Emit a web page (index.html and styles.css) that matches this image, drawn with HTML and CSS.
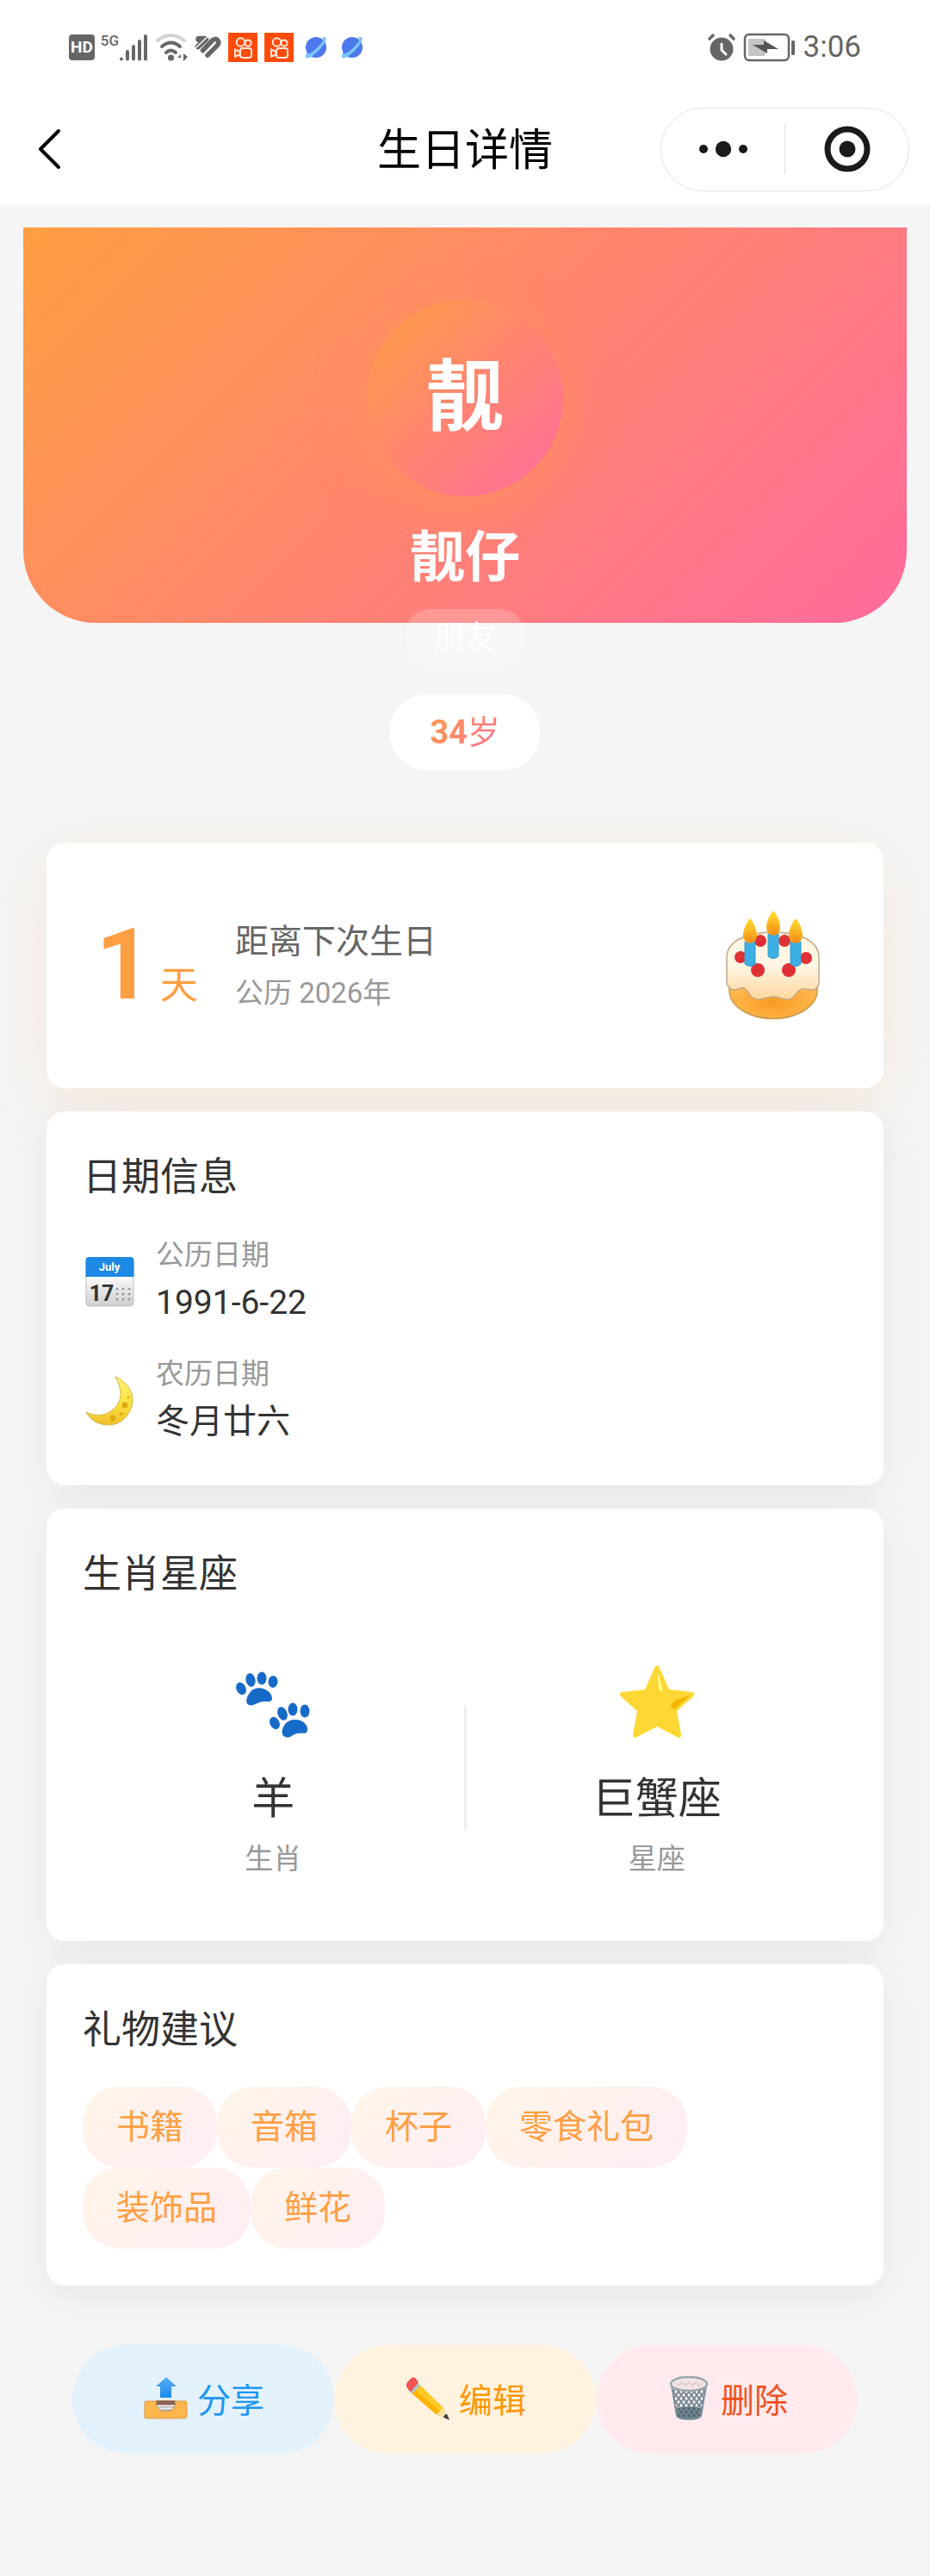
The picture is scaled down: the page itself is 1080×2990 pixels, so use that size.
FILE: index.html
```
<!DOCTYPE html>
<html lang="zh-CN">
<head>
    <meta charset="UTF-8">
    <meta name="viewport" content="width=device-width, initial-scale=1.0">
    <title>生日详情</title>
    <link rel="stylesheet" href="styles.css">
</head>
<body>
    <!-- Status bar -->
    <div class="status-bar">
        <div class="status-left">
            <span class="hd">HD</span>
            <span class="signal">
                <span class="network">5G</span>
                <svg width="34" height="32" viewBox="0 0 34 32" fill="none" stroke="#666" stroke-width="4" stroke-linecap="round">
                    <path d="M3 29.500v0M10 21v8.500M17 15v14.500M24 9v20.500M31 3v26.500"/>
                </svg>
            </span>
            <svg width="38" height="34" viewBox="0 0 38 34" fill="none" stroke-linecap="round" stroke-width="4">
                <path d="M3 9Q18 -3 34 9" stroke="#d2d2d2"/>
                <path d="M8 16Q18.500 7 29 16M13 23Q18.500 18 24 23" stroke="#666"/>
                <circle cx="18.500" cy="29" r="3.600" fill="#666"/>
                <path d="M30 25l-4 4h4v4zM33 24v9l5-5z" fill="#666"/>
            </svg>
            <svg width="31" height="30" viewBox="0 0 31 30" fill="none" stroke="#666" stroke-width="6.500" stroke-linecap="round">
                <path d="M4 14L13 5.500"/>
                <path d="M5 5.500h6" stroke-width="7.500"/>
                <path d="M9.500 18.500L21 6.500Q25 4 27 7Q29 10 26 13L15 24" stroke-width="5.500"/>
                <path d="M2 15L15 2.500M12.500 21.500L23 11" stroke="#fff" stroke-width="1.500"/>
            </svg>
            <svg width="34" height="34" viewBox="0 0 34 34" fill="none" stroke="#ffe9dc" stroke-width="2">
                <path d="M0 0h34v34H0z" fill="#ff4b0a" stroke="none"/>
                <circle cx="14.500" cy="11" r="4.800"/><circle cx="23" cy="12" r="3.600"/>
                <rect x="14" y="18" width="13" height="11" rx="3"/><path d="M13.500 22L8 19.500v8l5.500-2z"/>
            </svg>
            <svg width="34" height="34" viewBox="0 0 34 34" fill="none" stroke="#ffe9dc" stroke-width="2">
                <path d="M0 0h34v34H0z" fill="#ff4b0a" stroke="none"/>
                <circle cx="14.500" cy="11" r="4.800"/><circle cx="23" cy="12" r="3.600"/>
                <rect x="14" y="18" width="13" height="11" rx="3"/><path d="M13.500 22L8 19.500v8l5.500-2z"/>
            </svg>
            <svg width="34" height="34" viewBox="0 0 34 34">
                <circle cx="18" cy="17" r="12" fill="#4d79ec"/>
                <path d="M24 6Q32 3 29 10Q25 18 16 25Q9 31 6 29Q5 26 8 22Q7 27 14 22Q23 15 26 9Q27 6 24 6Z" fill="#7cc6fb"/>
            </svg>
            <svg width="34" height="34" viewBox="0 0 34 34">
                <circle cx="18" cy="17" r="12" fill="#4d79ec"/>
                <path d="M24 6Q32 3 29 10Q25 18 16 25Q9 31 6 29Q5 26 8 22Q7 27 14 22Q23 15 26 9Q27 6 24 6Z" fill="#7cc6fb"/>
            </svg>
        </div>
        <div class="status-right">
            <svg width="34" height="34" viewBox="0 0 34 34" fill="none" stroke-linecap="round" stroke-width="3.500">
                <circle cx="17" cy="19" r="13.500" fill="#666"/>
                <path d="M3 7l4-4M31 7l-4-4" stroke="#666"/>
                <path d="M17 13v7l5 5" stroke="#fff" stroke-width="3"/>
            </svg>
            <svg width="62" height="34" viewBox="0 0 62 34">
                <rect x="2" y="2" width="51" height="30" rx="5" fill="none" stroke="#666" stroke-width="2.500"/>
                <rect x="6" y="7" width="20" height="20" rx="2" fill="#c4c4c4"/>
                <path d="M11 14h13v-5l17 10H28v5z" fill="#555"/>
                <rect x="56" y="9" width="4" height="17" rx="1.500" fill="#666"/>
            </svg>
            <span class="time">3:06</span>
        </div>
    </div>

    <!-- Navigation bar -->
    <header class="nav-bar">
        <button type="button" class="back-btn" aria-label="返回">
            <svg width="30" height="50" viewBox="0 0 30 50" fill="none" stroke="#000" stroke-width="4" stroke-linecap="round" stroke-linejoin="round">
                <path d="M26 4L5 25L26 46"/>
            </svg>
        </button>
        <h1 class="nav-title">生日详情</h1>
        <div class="capsule">
            <button type="button" class="capsule-btn" aria-label="更多">
                <svg width="58" height="20" viewBox="0 0 58 20" fill="#1a1a1a">
                    <circle cx="6" cy="10" r="5"/><circle cx="29" cy="10" r="9.200"/><circle cx="52" cy="10" r="5"/>
                </svg>
            </button>
            <button type="button" class="capsule-btn" aria-label="关闭">
                <svg width="54" height="54" viewBox="0 0 54 54">
                    <circle cx="27" cy="27" r="23" fill="none" stroke="#1a1a1a" stroke-width="7"/>
                    <circle cx="27" cy="27" r="9.500" fill="#1a1a1a"/>
                </svg>
            </button>
        </div>
    </header>

    <main class="page">
        <!-- Profile -->
        <section class="hero">
            <div class="avatar">靓</div>
            <div class="name">靓仔</div>
            <div class="relation">朋友</div>
            <div class="age"><span class="age-text"><b>34</b>岁</span></div>
        </section>

        <div class="cards">
            <!-- Countdown -->
            <section class="card countdown">
                <div class="days"><span class="days-number">1</span><span class="days-unit">天</span></div>
                <div class="countdown-info">
                    <div class="countdown-label">距离下次生日</div>
                    <div class="countdown-date">公历 2026年</div>
                </div>
                <svg width="112" height="128" viewBox="0 0 112 128">
                    <defs>
                        <linearGradient id="icing" x1="0" y1="0" x2="0" y2="1">
                            <stop offset="0.500" stop-color="#fff6e4"/><stop offset="1" stop-color="#ffd69b"/>
                        </linearGradient>
                        <radialGradient id="base" cx="0.500" cy="0.600" r="0.500">
                            <stop offset="0" stop-color="#fa9a24"/><stop offset="1" stop-color="#ffb74d"/>
                        </radialGradient>
                        <radialGradient id="flame" gradientUnits="userSpaceOnUse" cx="0" cy="26" r="20">
                            <stop offset="0" stop-color="#f58d16"/><stop offset="1" stop-color="#fdd02d"/>
                        </radialGradient>
                    </defs>
                    <path d="M5 78V95C6 113 30 126.500 56 126.500S106 113 107 95V78Z" fill="url(#base)" stroke="#c99648" stroke-width="1.500"/>
                    <path d="M2 55C2 37 24 26 56 26S109 37 109 55V86C107 95 98 93 93 92C84 90 82 103 74 104C66 104 63 101 56 101C47 101 46 104 38 104C26 103 28 89 18 91C10 95 4 92 2 85Z" fill="url(#icing)" stroke="#c3a989" stroke-width="1.500"/>
                    <g fill="#df3034">
                        <circle cx="41" cy="36" r="7"/><circle cx="69" cy="36" r="7"/>
                        <circle cx="18" cy="55" r="7"/><circle cx="94" cy="56" r="7"/>
                        <circle cx="38" cy="70" r="8"/><circle cx="74" cy="70" r="8"/>
                    </g>
                    <g fill="#3eafe4" stroke="#319ccd">
                        <path d="M50 28h12v26q-6 5-12 0zM23 37h12v26q-6 5-12 0zM76 37h12v26q-6 5-12 0z"/>
                    </g>
                    <g fill="url(#flame)">
                        <path d="M0 0C-4 4-8 13-8 19C-8 32 8 32 8 19C8 13 4 4 0 0Z" transform="translate(56 1)"/>
                        <path d="M0 0C-4 4-8 13-8 19C-8 32 8 32 8 19C8 13 4 4 0 0Z" transform="translate(29 10)"/>
                        <path d="M0 0C-4 4-8 13-8 19C-8 32 8 32 8 19C8 13 4 4 0 0Z" transform="translate(82 10)"/>
                    </g>
                </svg>
            </section>

            <!-- Dates -->
            <section class="card">
                <h2 class="card-title">日期信息</h2>
                <div class="date-list">
                    <div class="date-item">
                        <svg width="64" height="64" viewBox="0 0 64 64">
                            <defs>
                                <linearGradient id="paper" x1="0" y1="0" x2="0" y2="1">
                                    <stop offset="0.400" stop-color="#fafafa"/><stop offset="1" stop-color="#cfcfcf"/>
                                </linearGradient>
                            </defs>
                            <rect x="4" y="4" width="55" height="56" rx="4" fill="url(#paper)" stroke="#bdbdbd"/>
                            <path d="M3.500 26V7q0-4 4-4h48q4 0 4 4v19z" fill="#1e88e5"/>
                            <text class="calendar-month" x="31" y="19">July</text>
                            <text class="calendar-day" x="22" y="54">17</text>
                            <g fill="#9a9a9a">
                                <circle cx="40" cy="40" r="1.500"/><circle cx="47" cy="40" r="1.500"/><circle cx="54" cy="40" r="1.500"/>
                                <circle cx="40" cy="46" r="1.500"/><circle cx="47" cy="46" r="1.500"/><circle cx="54" cy="46" r="1.500"/>
                                <circle cx="40" cy="52" r="1.500"/><circle cx="47" cy="52" r="1.500"/><circle cx="54" cy="52" r="1.500"/>
                            </g>
                        </svg>
                        <div>
                            <div class="date-label">公历日期</div>
                            <div class="date-value">1991-6-22</div>
                        </div>
                    </div>
                    <div class="date-item">
                        <svg width="64" height="64" viewBox="0 0 64 64">
                            <defs>
                                <linearGradient id="moon" x1="0" y1="0" x2="0" y2="1">
                                    <stop offset="0" stop-color="#fff176"/><stop offset="0.600" stop-color="#f9e03c"/><stop offset="1" stop-color="#efbf2c"/>
                                </linearGradient>
                            </defs>
                            <path d="M38 4C50 9 59 20 58 33C56 49 44 60 30 60C17 60 8 53 4 45C18 52 32 48 40 37C47 27 44 14 38 4Z" fill="url(#moon)" stroke="#d0b548"/>
                            <g fill="#dfa90b">
                                <circle cx="49" cy="37" r="3.500"/><circle cx="35" cy="52" r="3.500"/>
                                <ellipse cx="45" cy="47" rx="2.500" ry="1.800"/><ellipse cx="53" cy="28" rx="1.800" ry="1.300"/>
                            </g>
                        </svg>
                        <div>
                            <div class="date-label">农历日期</div>
                            <div class="date-value">冬月廿六</div>
                        </div>
                    </div>
                </div>
            </section>

            <!-- Zodiac -->
            <section class="card">
                <h2 class="card-title">生肖星座</h2>
                <div class="zodiac">
                    <div class="zodiac-item">
                        <svg width="100" height="100" viewBox="0 0 100 100" fill="#176bc8">
                            <ellipse cx="13" cy="34" rx="5.500" ry="7.500" transform="rotate(-28 13 34)"/>
                            <ellipse cx="24" cy="24" rx="5.500" ry="8" transform="rotate(-12 24 24)"/>
                            <ellipse cx="37" cy="22" rx="5.500" ry="7.500"/>
                            <ellipse cx="50" cy="26" rx="5.500" ry="7" transform="rotate(5 50 26)"/>
                            <path d="M22 53C16 50 21 39 27 35C36 30 48 36 49 45C49 50 44 49 39 49C32 49 28 55 22 53Z"/>
                            <ellipse cx="52" cy="74" rx="5.500" ry="7.500" transform="rotate(-28 52 74)"/>
                            <ellipse cx="61" cy="63" rx="5.500" ry="8" transform="rotate(-22 61 63)"/>
                            <ellipse cx="73" cy="58" rx="5.500" ry="7.500"/>
                            <ellipse cx="87" cy="60" rx="5.500" ry="7.500"/>
                            <path d="M64 90C57 87 62 75 68 72C77 67 90 72 90 81C90 88 85 85 79 86C73 86 70 93 64 90Z"/>
                        </svg>
                        <div class="zodiac-name">羊</div>
                        <div class="zodiac-label">生肖</div>
                    </div>
                    <div class="divider"></div>
                    <div class="zodiac-item">
                        <svg width="100" height="100" viewBox="0 0 100 100">
                            <path d="M47 10Q50 4 53 10L64 35L90 38Q96 39 91 44L73 60L78 87Q78 93 73 90L50 78L27 90Q22 93 22 87L27 60L9 44Q4 39 10 38L36 35Z" fill="#fdd835"/>
                            <path d="M51 15L56 33Q57 38 54 37Q51 35 51 15Z" fill="#ffff8d"/>
                            <path d="M88 42L73 56Q67 60 66 54Q68 47 88 42Z" fill="#f4b400"/>
                        </svg>
                        <div class="zodiac-name">巨蟹座</div>
                        <div class="zodiac-label">星座</div>
                    </div>
                </div>
            </section>

            <!-- Gifts -->
            <section class="card">
                <h2 class="card-title">礼物建议</h2>
                <div class="gifts">
                    <span class="gift">书籍</span>
                    <span class="gift">音箱</span>
                    <span class="gift">杯子</span>
                    <span class="gift">零食礼包</span>
                    <span class="gift">装饰品</span>
                    <span class="gift">鲜花</span>
                </div>
            </section>
        </div>

        <!-- Actions -->
        <div class="actions">
            <button type="button" class="action share">
                <svg width="54" height="54" viewBox="0 0 54 54">
                    <defs>
                        <linearGradient id="arrow" x1="0" y1="0" x2="0" y2="1">
                            <stop offset="0" stop-color="#5bb2fa"/><stop offset="1" stop-color="#1b8ae8"/>
                        </linearGradient>
                    </defs>
                    <path d="M28 3L40 14H34V27H21V14H16Z" fill="url(#arrow)"/>
                    <rect x="3" y="31" width="49" height="20" rx="2" fill="#ffb74d" stroke="#d99a43"/>
                    <path d="M16 31h23q0 12-11.500 12T16 31" fill="#f2f2f2" stroke="#b9853e"/>
                    <path d="M17 30.500h21v5H17z" fill="#8d6253"/>
                    <path d="M18 38h19M21 41h13" stroke="#999"/>
                </svg>
                分享
            </button>
            <button type="button" class="action edit">
                <svg width="54" height="54" viewBox="0 0 54 54">
                    <path d="M8 21L18 12L46 39L52 52L38 47Z" fill="#ffb300"/>
                    <path d="M12 17L18 12L46 39L42 43Z" fill="#ffca28"/>
                    <path d="M38 47Q39 43 42 43Q43 40 46 39L52 52Z" fill="#ffe0a0"/>
                    <path d="M46 50Q47 46 50 46L53 53Z" fill="#424242"/>
                    <path d="M6 19L15 9L19 13L10 22Z" fill="#b0bec5"/>
                    <path d="M6 19L3 14Q2 11 5 8L9 4Q11 2 14 5L17 9L8 20Z" fill="#ef5350"/>
                </svg>
                编辑
            </button>
            <button type="button" class="action delete">
                <svg width="54" height="54" viewBox="0 0 54 54">
                    <defs>
                        <pattern id="mesh" width="6" height="8" patternUnits="userSpaceOnUse">
                            <path d="M0 0L6 8M6 0L0 8" stroke="#6f8791" stroke-width="1.800"/>
                        </pattern>
                    </defs>
                    <path d="M7 13L13 48Q14 52 27 52T41 48L47 13Z" fill="#fbe9ea"/>
                    <path d="M12 40Q27 35 42 40L40 48Q38 52 27 52T13 48Z" fill="#52646d"/>
                    <path d="M7 13L13 48Q14 52 27 52T41 48L47 13Z" fill="url(#mesh)" stroke="#78909c" stroke-width="2"/>
                    <ellipse cx="27" cy="11" rx="21" ry="8" fill="#f5e3e4" stroke="#9aa7ad" stroke-width="2.500"/>
                    <path d="M11 10l4 3 4-4 4 4 4-4 4 4 4-4 4 4 4-3" fill="none" stroke="#dcc9cb" stroke-width="1.500"/>
                </svg>
                删除
            </button>
        </div>
    </main>
</body>
</html>
```

FILE: styles.css
```
* {
    box-sizing: border-box;
}
body {
    margin: 0;
    font-family: Roboto, "Noto Sans CJK SC", sans-serif;
    background-color: #f5f5f5;
    color: #333;
}
svg {
    display: block;
    flex: none;
}
button {
    font-family: inherit;
    border: none;
    background: none;
    padding: 0;
    cursor: pointer;
}

/* Status bar */
.status-bar {
    display: flex;
    justify-content: space-between;
    align-items: center;
    height: 109px;
    padding: 0 80px;
    background: #fff;
    color: #666;
}
.status-left,
.status-right {
    display: flex;
    align-items: center;
    gap: 8px;
}
.hd {
    width: 30px;
    border-radius: 4px;
    background: #666;
    color: #fff;
    font-size: 19px;
    font-weight: bold;
    line-height: 30px;
    text-align: center;
}
.signal {
    display: flex;
    justify-content: flex-end;
    width: 54px;
}
.network {
    font-size: 17px;
    font-weight: 500;
    line-height: 16px;
}
.time {
    font-size: 35px;
    line-height: 40px;
}

/* Navigation bar */
.nav-bar {
    display: grid;
    grid-template-columns: 1fr auto 1fr;
    align-items: center;
    height: 128px;
    padding: 0 24px 0 42px;
    background: #fff;
}
.back-btn {
    justify-self: start;
}
.nav-title {
    margin: 0;
    padding: 3px 18px 0 0;
    color: #000;
    font-size: 51px;
    font-weight: normal;
    line-height: 60px;
}
.capsule {
    display: flex;
    align-items: center;
    justify-self: end;
    width: 289px;
    height: 97px;
    border: 1px solid #e2e2e2;
    border-radius: 49px;
}
.capsule-btn {
    display: flex;
    flex: 1;
    justify-content: center;
    align-items: center;
    height: 58px;
}
.capsule-btn + .capsule-btn {
    border-left: 1px solid #ddd;
}

.page {
    padding: 27px 27px 140px;
}

/* Profile */
.hero {
    position: relative;
    display: flex;
    flex-direction: column;
    align-items: center;
    padding: 84px 0;
}
.hero::before {
    content: "";
    position: absolute;
    top: 0;
    left: 0;
    right: 0;
    height: 459px;
    background: linear-gradient(135deg, #ff9f43, #ff6b9d);
    border-radius: 0 0 84px 84px;
    z-index: -1;
}
.avatar {
    width: 228px;
    border-radius: 50%;
    background: linear-gradient(135deg, #ff9f43, #ff6b9d);
    box-shadow: 0 20px 64px rgba(255, 159, 67, 0.4);
    color: #fff;
    font-size: 90px;
    font-weight: bold;
    line-height: 228px;
    text-align: center;
}
.name {
    margin: 30px 0 17px;
    color: #fff;
    font-size: 64px;
    font-weight: bold;
    line-height: 84px;
}
.relation {
    padding: 6px 33px;
    border-radius: 28px;
    background: rgba(255, 255, 255, 0.2);
    color: rgba(255, 255, 255, 0.9);
    font-size: 36px;
    line-height: 55px;
}
.age {
    margin-top: 32px;
    padding: 14px 46px;
    border-radius: 42px;
    background: #fff;
    font-size: 38px;
    line-height: 60px;
}
.age-text {
    display: block;
    background: linear-gradient(135deg, #ff9f43, #ff6b9d);
    -webkit-background-clip: text;
    background-clip: text;
    color: transparent;
}

/* Cards */
.cards {
    display: flex;
    flex-direction: column;
    gap: 27px;
    padding: 0 27px;
}
.card {
    padding: 43px 42px;
    border-radius: 21px;
    background: #fff;
    box-shadow: 0 11px 54px rgba(0, 0, 0, 0.06);
}
.card-title {
    margin: 0 0 31px;
    font-size: 45px;
    font-weight: normal;
    line-height: 68px;
}

/* Countdown */
.countdown {
    display: flex;
    align-items: center;
    padding: 78px 72px 79px 57px;
    box-shadow: 0 20px 86px rgba(255, 159, 67, 0.15);
}
.days {
    display: flex;
    align-items: baseline;
    gap: 9px;
    color: #ff9f43;
}
.days-number {
    font-size: 115px;
    font-weight: bold;
    line-height: 128px;
}
.days-unit {
    font-size: 44px;
    line-height: 60px;
}
.countdown-info {
    flex: 1;
    padding: 5px 0 0 43px;
    line-height: 60px;
}
.countdown-label {
    color: #666;
    font-size: 39px;
}
.countdown-date {
    color: #999;
    font-size: 33px;
}

/* Dates */
.date-list {
    display: flex;
    flex-direction: column;
    gap: 27px;
}
.date-item {
    display: flex;
    align-items: center;
    gap: 21px;
}
.date-label,
.zodiac-label {
    color: #999;
    font-size: 33px;
    line-height: 50px;
}
.date-value {
    font-size: 39px;
    line-height: 61px;
}
.calendar-month,
.calendar-day {
    font-weight: bold;
    text-anchor: middle;
}
.calendar-month {
    fill: #fff;
    font-size: 13px;
}
.calendar-day {
    fill: #333;
    font-size: 25px;
}

/* Zodiac */
.zodiac {
    display: flex;
    align-items: center;
}
.zodiac-item {
    display: flex;
    flex: 1;
    flex-direction: column;
    align-items: center;
    padding: 33px 0 27px;
}
.zodiac-name {
    margin: 27px 0 10px;
    font-size: 50px;
    line-height: 70px;
}
.divider {
    width: 3px;
    height: 144px;
    background: #eee;
}

/* Gifts */
.gifts {
    display: flex;
    flex-wrap: wrap;
}
.gift {
    padding: 17px 39px;
    border-radius: 42px;
    background: linear-gradient(135deg, #fff5e9, #ffedf4);
    color: #ff9f43;
    font-size: 39px;
    line-height: 60px;
}

/* Actions */
.actions {
    display: flex;
    padding: 69px 57px 0;
}
.action {
    display: flex;
    flex: 1;
    justify-content: center;
    align-items: center;
    gap: 10px;
    height: 126px;
    padding-bottom: 4px;
    border-radius: 63px;
    font-size: 39px;
}
.share {
    background: #e3f2fd;
    color: #2196f3;
}
.edit {
    background: #fff3e0;
    color: #ff9800;
}
.delete {
    background: #ffebee;
    color: #f4511e;
}
```
